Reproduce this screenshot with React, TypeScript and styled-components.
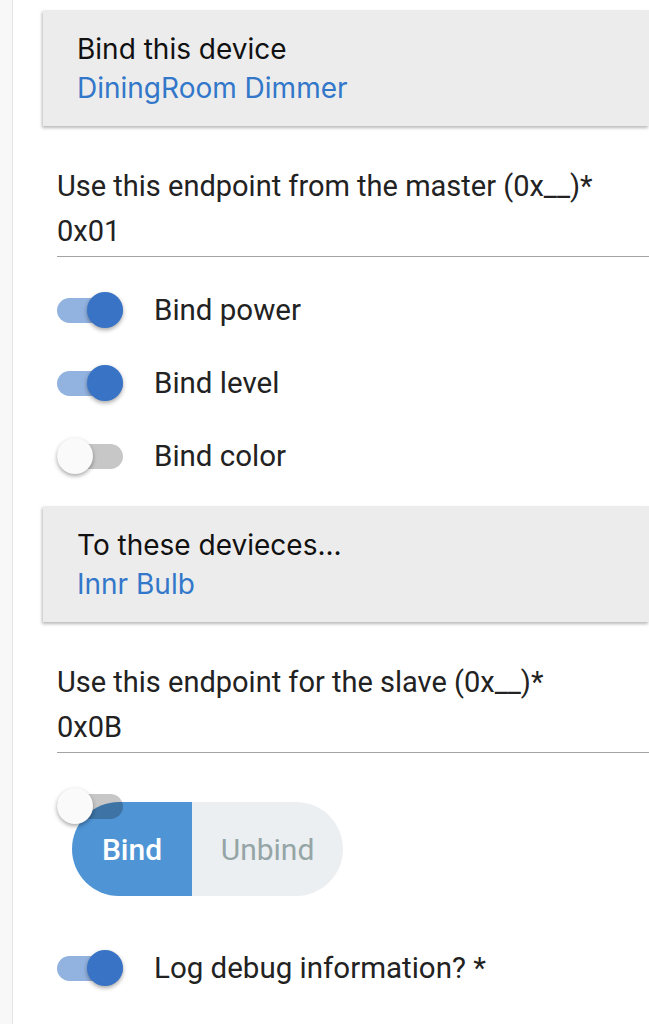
import React, { useState } from 'react';
import styled, { createGlobalStyle } from 'styled-components';

const GlobalStyle = createGlobalStyle`
    html, body {
        margin: 0;
        padding: 0;
        background: #ffffff;
        font-family: Roboto, "Noto Sans", "Liberation Sans", sans-serif;
    }
`;

const Page = styled.div`
    display: flex;
    min-height: 1024px;
    overflow: hidden;
`;

const SideStrip = styled.div`
    flex: 0 0 12px;
    background: #f8f8f8;
    border-right: 1px solid #e4e4e4;
`;

const Main = styled.main`
    flex: 1;
    padding-top: 10px;
`;

const Card = styled.section`
    margin-left: 30px;
    padding: 20px 34px 18px;
    background: #ececec;
    box-shadow: -1px 2px 3px rgba(0, 0, 0, 0.28);
    font-family: Inter, "Liberation Sans", sans-serif;
    font-size: 28px;
    line-height: 39px;
`;

const CardTitle = styled.div`
    color: #111111;
`;

const CardLink = styled.div`
    color: #3277c9;
`;

const Field = styled.div`
    margin: 40px 0 0 44px;
    padding-bottom: 5px;
    border-bottom: 1px solid #a3a3a3;
    font-size: 29px;
    color: #222222;
`;

const FieldLabel = styled.div`
    line-height: 40px;
`;

const FieldValue = styled.div`
    margin-top: 5px;
    line-height: 40px;
`;

const Switches = styled.div<{ $gap: number }>`
    margin: ${(p) => p.$gap}px 0 14px 44px;
`;

const SwitchRow = styled.label`
    display: flex;
    align-items: center;
    gap: 31px;
    height: 73px;
    font-size: 29.5px;
    color: #222222;
    cursor: pointer;
`;

const SwitchBox = styled.span<{ $overlay?: boolean }>`
    position: ${(p) => (p.$overlay ? 'absolute' : 'relative')};
    top: 0;
    left: 0;
    z-index: 2;
    flex: 0 0 66px;
    width: 66px;
    height: 36px;
`;

const Track = styled.span<{ $on: boolean }>`
    position: absolute;
    left: 0;
    top: 6px;
    width: 66px;
    height: 25px;
    border-radius: 13px;
    background: ${(p) => (p.$on ? 'rgba(56, 115, 198, 0.55)' : 'rgba(0, 0, 0, 0.22)')};
`;

const Thumb = styled.span<{ $on: boolean }>`
    position: absolute;
    top: 0;
    left: ${(p) => (p.$on ? '30px' : '0')};
    width: 36px;
    height: 36px;
    border-radius: 50%;
    background: ${(p) => (p.$on ? '#3873c6' : '#fafafa')};
    box-shadow: 0 2px 4px rgba(0, 0, 0, 0.35);
`;

const BindArea = styled.div`
    position: relative;
    margin: 35px 0 0 44px;
    padding: 14px 0 0 15px;
`;

const Segmented = styled.div`
    display: flex;
    width: 271px;
    height: 94px;
    border-radius: 47px;
    overflow: hidden;
`;

const Segment = styled.button<{ $active: boolean; $w: number }>`
    width: ${(p) => p.$w}px;
    border: none;
    padding: 0;
    font-family: inherit;
    font-size: 30px;
    font-weight: ${(p) => (p.$active ? 500 : 400)};
    background: ${(p) => (p.$active ? '#4f94d4' : '#eceff1')};
    color: ${(p) => (p.$active ? '#ffffff' : '#95a5a6')};
    cursor: pointer;
`;

const Switch: React.FC<{ on: boolean; overlay?: boolean; onToggle?: () => void }> = ({ on, overlay, onToggle }) => (
    <SwitchBox $overlay={overlay} onClick={onToggle}>
        <Track $on={on} />
        <Thumb $on={on} />
    </SwitchBox>
);

const App: React.FC = () => {
    const [flags, setFlags] = useState({ power: true, level: true, color: false, debug: true });
    const [mode, setMode] = useState<'bind' | 'unbind'>('bind');

    const flip = (key: keyof typeof flags) => setFlags((f) => ({ ...f, [key]: !f[key] }));

    return (
        <>
            <GlobalStyle />
            <Page>
                <SideStrip />
                <Main>
                    <Card>
                        <CardTitle>Bind this device</CardTitle>
                        <CardLink>DiningRoom Dimmer</CardLink>
                    </Card>
                    <Field>
                        <FieldLabel>Use this endpoint from the master (0x__)*</FieldLabel>
                        <FieldValue>0x01</FieldValue>
                    </Field>
                    <Switches $gap={16}>
                        <SwitchRow>
                            <Switch on={flags.power} onToggle={() => flip('power')} />
                            Bind power
                        </SwitchRow>
                        <SwitchRow>
                            <Switch on={flags.level} onToggle={() => flip('level')} />
                            Bind level
                        </SwitchRow>
                        <SwitchRow>
                            <Switch on={flags.color} onToggle={() => flip('color')} />
                            Bind color
                        </SwitchRow>
                    </Switches>
                    <Card>
                        <CardTitle>To these devieces...</CardTitle>
                        <CardLink>Innr Bulb</CardLink>
                    </Card>
                    <Field>
                        <FieldLabel>Use this endpoint for the slave (0x__)*</FieldLabel>
                        <FieldValue>0x0B</FieldValue>
                    </Field>
                    <BindArea>
                        <Switch on={false} overlay />
                        <Segmented>
                            <Segment $w={120} $active={mode === 'bind'} onClick={() => setMode('bind')}>
                                Bind
                            </Segment>
                            <Segment $w={151} $active={mode === 'unbind'} onClick={() => setMode('unbind')}>
                                Unbind
                            </Segment>
                        </Segmented>
                    </BindArea>
                    <Switches $gap={35}>
                        <SwitchRow>
                            <Switch on={flags.debug} onToggle={() => flip('debug')} />
                            Log debug information? *
                        </SwitchRow>
                    </Switches>
                </Main>
            </Page>
        </>
    );
};

export default App;
